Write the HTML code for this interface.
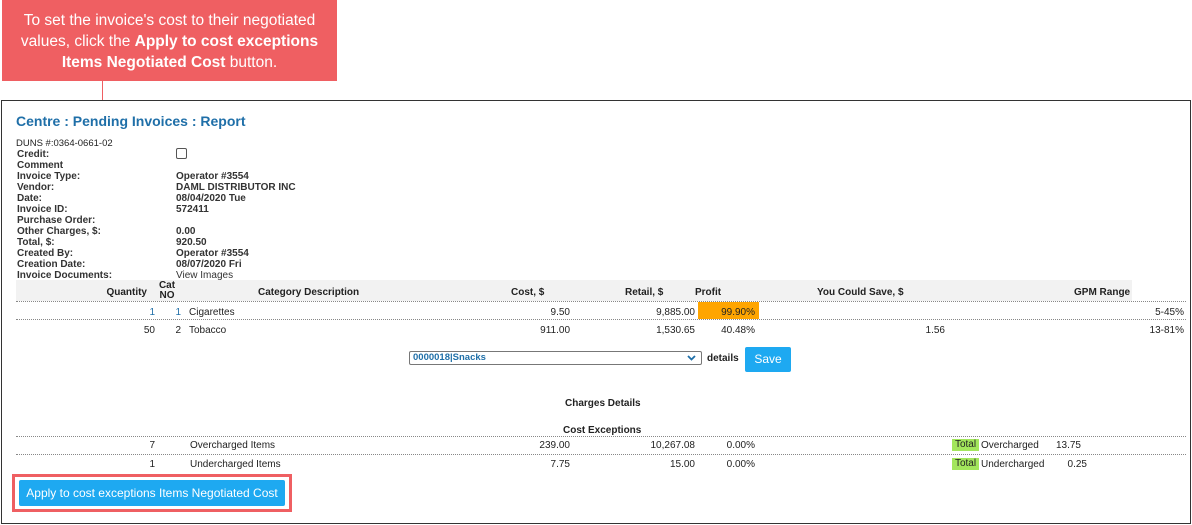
<!DOCTYPE html>
<html><head><meta charset="utf-8"><style>
*{margin:0;padding:0;box-sizing:border-box}
body{width:1192px;height:525px;background:#fff;position:relative;overflow:hidden;font-family:"Liberation Sans",Arial,sans-serif;font-size:10px;color:#222}
.a{position:absolute;white-space:nowrap;line-height:11px}
.r{text-align:right}
.b{font-weight:bold}
.dot{position:absolute;left:16px;width:1170px;border-top:1px dotted #888;height:0}
</style></head><body>
<div class="a" style="left:2px;top:0;width:335px;height:81px;background:#ef5f62;color:#fff;line-height:21px;text-align:center;padding:10px 8px 0;white-space:normal;font-family:'Liberation Sans',sans-serif;font-size:15.5px">To set the invoice's cost to their negotiated values, click the <b>Apply to cost exceptions Items Negotiated Cost</b> button.</div>
<div class="a" style="left:102px;top:81px;width:1px;height:19px;background:#ef5f62"></div>
<div class="a" style="left:1px;top:100px;width:1190px;height:424px;border:1px solid #333"></div>
<div class="a b" style="left:16px;top:113px;font-size:14px;line-height:16px;color:#1f6fa8">Centre : Pending Invoices : Report</div>
<div class="a" style="left:16px;top:138px;font-size:9.5px">DUNS #:0364-0661-02</div>
<div class="a b" style="left:17px;top:149px;color:#333">Credit:<br>Comment<br>Invoice Type:<br>Vendor:<br>Date:<br>Invoice ID:<br>Purchase Order:<br>Other Charges, $:<br>Total, $:<br>Created By:<br>Creation Date:<br>Invoice Documents:</div>
<div class="a" style="left:176px;top:148px;width:11px;height:11px;border:1px solid #555;border-radius:2px"></div>
<div class="a b" style="left:176px;top:171px;color:#333">Operator #3554<br>DAML DISTRIBUTOR INC<br>08/04/2020 Tue<br>572411<br><br>0.00<br>920.50<br>Operator #3554<br>08/07/2020 Fri<br><span style="font-weight:normal">View Images</span></div>
<div class="a" style="left:16px;top:280px;width:1116px;height:21px;background:#f2f2f2"></div>
<div class="a b r" style="left:60px;top:287px;width:87px">Quantity</div>
<div class="a b" style="left:158px;top:281px;text-align:center;width:18px;line-height:10px">Cat<br>NO</div>
<div class="a b" style="left:258px;top:287px">Category Description</div>
<div class="a b" style="left:511px;top:287px">Cost, $</div>
<div class="a b" style="left:625px;top:287px">Retail, $</div>
<div class="a b" style="left:695px;top:287px">Profit</div>
<div class="a b" style="left:817px;top:287px">You Could Save, $</div>
<div class="a b" style="left:1074px;top:287px">GPM Range</div>
<div class="dot" style="top:301px"></div>
<div class="a" style="left:698px;top:302px;width:61px;height:17px;background:#ffa500"></div>
<div class="a r" style="left:100px;top:307px;width:55px;color:#1f6fa8">1</div>
<div class="a r" style="left:160px;top:307px;width:21px;color:#1f6fa8">1</div>
<div class="a" style="left:189px;top:307px">Cigarettes</div>
<div class="a r" style="left:500px;top:307px;width:70px">9.50</div>
<div class="a r" style="left:600px;top:307px;width:95px">9,885.00</div>
<div class="a r" style="left:700px;top:307px;width:55px">99.90%</div>
<div class="a r" style="left:1100px;top:307px;width:84px">5-45%</div>
<div class="dot" style="top:319px"></div>
<div class="a r" style="left:100px;top:325px;width:55px">50</div>
<div class="a r" style="left:160px;top:325px;width:21px">2</div>
<div class="a" style="left:189px;top:325px">Tobacco</div>
<div class="a r" style="left:500px;top:325px;width:70px">911.00</div>
<div class="a r" style="left:600px;top:325px;width:95px">1,530.65</div>
<div class="a r" style="left:700px;top:325px;width:55px">40.48%</div>
<div class="a r" style="left:880px;top:325px;width:65px">1.56</div>
<div class="a r" style="left:1100px;top:325px;width:84px">13-81%</div>
<div class="a b" style="left:409px;top:351px;width:293px;height:14px;border:1px solid #777;border-radius:2px;color:#1f6fa8;padding-left:3px;line-height:12px;font-size:9.5px">0000018|Snacks<svg style="position:absolute;right:5px;top:3px" width="9" height="6" viewBox="0 0 9 6"><path d="M1 1 L4.5 4.5 L8 1" stroke="#1f6fa8" stroke-width="1.8" fill="none"/></svg></div>
<div class="a b" style="left:707px;top:353px">details</div>
<div class="a" style="left:745px;top:347px;width:46px;height:25px;background:#1ea9f1;border-radius:2px;color:#fff;font-size:12px;line-height:25px;text-align:center">Save</div>
<div class="a b" style="left:565px;top:398px">Charges Details</div>
<div class="a b" style="left:563px;top:425px">Cost Exceptions</div>
<div class="dot" style="top:436px"></div>
<div class="a r" style="left:100px;top:440px;width:55px">7</div>
<div class="a" style="left:190px;top:440px">Overcharged Items</div>
<div class="a r" style="left:500px;top:440px;width:70px">239.00</div>
<div class="a r" style="left:600px;top:440px;width:95px">10,267.08</div>
<div class="a r" style="left:700px;top:440px;width:55px">0.00%</div>
<div class="a" style="left:952px;top:439px;width:27px;height:12px;background:#a3e65c;text-align:center;line-height:12px">Total</div>
<div class="a" style="left:981px;top:440px">Overcharged</div>
<div class="a r" style="left:1040px;top:440px;width:41px">13.75</div>
<div class="dot" style="top:454px"></div>
<div class="a r" style="left:100px;top:459px;width:55px">1</div>
<div class="a" style="left:190px;top:459px">Undercharged Items</div>
<div class="a r" style="left:500px;top:459px;width:70px">7.75</div>
<div class="a r" style="left:600px;top:459px;width:95px">15.00</div>
<div class="a r" style="left:700px;top:459px;width:55px">0.00%</div>
<div class="a" style="left:952px;top:458px;width:27px;height:12px;background:#a3e65c;text-align:center;line-height:12px">Total</div>
<div class="a" style="left:981px;top:459px">Undercharged</div>
<div class="a r" style="left:1040px;top:459px;width:47px">0.25</div>
<div class="a" style="left:12px;top:474px;width:280px;height:38px;border:3px solid #ef5f62"></div>
<div class="a" style="left:19px;top:480px;width:266px;height:26px;background:#1ea9f1;border-radius:2px;color:#fff;font-size:12px;line-height:26px;text-align:center">Apply to cost exceptions Items Negotiated Cost</div>
</body></html>
